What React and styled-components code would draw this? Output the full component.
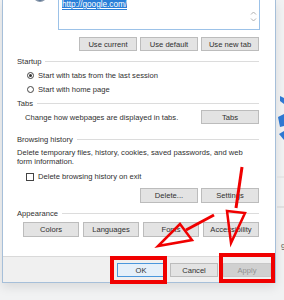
import React from "react";
import styled, { createGlobalStyle } from "styled-components";

const Global = createGlobalStyle`
  body {
    margin: 0;
    background: #f1f2f3;
    font-family: "Liberation Sans", Arial, sans-serif;
    font-size: 7.6px;
    color: #303030;
    overflow: hidden;
  }
`;

const Page = styled.div`
  position: relative;
  width: 284px;
  height: 300px;
  overflow: hidden;
  white-space: nowrap;
`;

const Dialog = styled.div`
  margin-left: 2px;
  width: 272px;
  height: 282px;
  border: 1px solid #a6bfd9;
  border-top: none;
  background: #f0f0f0;
  display: flex;
  flex-direction: column;
  box-shadow: 0 4px 10px rgba(0, 0, 0, 0.1);
`;

const Panel = styled.div`
  height: 256px;
  background: #fff;
  border-bottom: 1px solid #d9d9d9;
  padding: 0 16px 0 14px;
  display: flex;
  flex-direction: column;
`;

const HomeRow = styled.div`
  display: flex;
  height: 30px;
`;

const IconCol = styled.div`
  width: 37px;
  display: flex;
  justify-content: center;
  padding-left: 4px;
`;

const TextBox = styled.div`
  flex: 1;
  margin-right: -1px;
  border: 1px solid #9cc2e8;
  border-top: none;
  display: flex;
`;

const TextArea = styled.div`
  flex: 1;
  padding-left: 3px;
`;

const Selected = styled.span`
  display: inline-block;
  margin-top: -1px;
  background: #2a7fd8;
  color: #fff;
  font-size: 8.2px;
  text-decoration: underline;
  line-height: 9px;
  padding-bottom: 1px;
`;

const Scroll = styled.div`
  width: 11px;
  display: flex;
  flex-direction: column;
  align-items: center;
  gap: 3px;
  padding-top: 11px;
`;

const ButtonRow = styled.div`
  display: flex;
  justify-content: flex-end;
  gap: ${(p) => p.$gap || 3}px;
  margin-top: ${(p) => p.$top || 0}px;
`;

const Button = styled.div`
  width: ${(p) => p.$w || 58}px;
  height: ${(p) => p.$h || 14}px;
  box-sizing: border-box;
  border: 1px solid ${(p) => (p.$focus ? "#4a97dc" : p.$disabled ? "#c8c8c8" : "#bcbcbc")};
  background: ${(p) => (p.$focus ? "#e5f0fa" : p.$disabled ? "#d0d0d0" : "#e3e3e3")};
  color: ${(p) => (p.$disabled ? "#939393" : "#303030")};
  display: flex;
  align-items: center;
  justify-content: center;
`;

const Header = styled.div`
  display: flex;
  align-items: center;
  gap: 4px;
  height: 10px;
  margin-top: ${(p) => p.$top}px;
  &::after {
    content: "";
    flex: 1;
    height: 1px;
    background: #dcdcdc;
  }
`;

const Option = styled.div`
  display: flex;
  align-items: center;
  gap: 4px;
  height: ${(p) => p.$h || 14}px;
  margin-top: ${(p) => p.$top || 0}px;
  padding-left: ${(p) => p.$indent}px;
`;

const Radio = styled.span`
  width: 7px;
  height: 7px;
  box-sizing: border-box;
  border-radius: 50%;
  border: 1px solid #444;
  display: flex;
  align-items: center;
  justify-content: center;
  &::after {
    content: "";
    width: 3px;
    height: 3px;
    border-radius: 50%;
    background: ${(p) => (p.$on ? "#333" : "transparent")};
  }
`;

const Check = styled.span`
  width: 8px;
  height: 8px;
  box-sizing: border-box;
  border: 1px solid #444;
  background: #fff;
`;

const TabsRow = styled.div`
  display: flex;
  align-items: center;
  justify-content: space-between;
  height: 14px;
  margin-top: 2px;
  padding-left: 8px;
`;

const Desc = styled.div`
  margin-top: 4px;
  line-height: 9px;
`;

const Footer = styled.div`
  flex: 1;
  display: flex;
  justify-content: flex-end;
  align-items: flex-start;
  gap: 5px;
  padding: 6px 4px 0 0;
`;

const Mark = styled.div`
  position: absolute;
  left: ${(p) => p.$x}px;
  top: ${(p) => p.$y}px;
  width: ${(p) => p.$w}px;
  height: ${(p) => p.$h}px;
  box-sizing: border-box;
  border: 4px solid #f00000;
`;

const Overlay = styled.svg`
  position: absolute;
  left: 0;
  top: 0;
  pointer-events: none;
`;

const Backdrop = styled.svg`
  position: absolute;
  right: 0;
  top: 0;
`;

const GlobeIcon = () => (
  <svg width="14" height="3" viewBox="0 0 14 3">
    <path d="M2 0 Q7 4 12 0 Z" fill="#8595a8" />
    <path d="M5 0 Q7 2 9 0 Z" fill="#5a7596" />
  </svg>
);

const Chevron = ({ up }) => (
  <svg width="7" height="4" viewBox="0 0 7 4">
    <path d={up ? "M1 3.5 L3.5 1 L6 3.5" : "M1 0.5 L3.5 3 L6 0.5"} stroke="#b0b0b0" fill="none" />
  </svg>
);

export default function App() {
  return (
    <Page>
      <Global />
      <Backdrop width="9" height="300" viewBox="0 0 9 300">
        <path d="M5 96 L9 98 L9 104 L5 101 Z" fill="#2f78d2" />
        <path d="M3 117 L9 114 L9 126 L5 127 Z" fill="#2f78d2" />
        <path d="M4 134 L9 131 L9 140 Z" fill="#2f78d2" />
        <line x1="2" y1="177" x2="9" y2="177" stroke="#dcdcdc" />
        <line x1="2" y1="207" x2="9" y2="207" stroke="#cfcfcf" />
        <text x="6" y="248" fontSize="8" fill="#555" fontFamily="Liberation Sans">g</text>
      </Backdrop>
      <Dialog>
        <Panel>
          <HomeRow>
            <IconCol>
              <GlobeIcon />
            </IconCol>
            <TextBox>
              <TextArea>
                <Selected>http://google.com/</Selected>
              </TextArea>
              <Scroll>
                <Chevron up />
                <Chevron />
              </Scroll>
            </TextBox>
          </HomeRow>
          <ButtonRow $top={7}>
            <Button>Use current</Button>
            <Button>Use default</Button>
            <Button>Use new tab</Button>
          </ButtonRow>

          <Header $top={5}>Startup</Header>
          <Option $indent={10} $top={2}>
            <Radio $on />
            Start with tabs from the last session
          </Option>
          <Option $indent={10}>
            <Radio />
            Start with home page
          </Option>

          <Header $top={2}>Tabs</Header>
          <TabsRow>
            <span>Change how webpages are displayed in tabs.</span>
            <Button>Tabs</Button>
          </TabsRow>

          <Header $top={10}>Browsing history</Header>
          <Desc>
            Delete temporary files, history, cookies, saved passwords, and web
            <br />
            form information.
          </Desc>
          <Option $indent={9} $top={5} $h={11}>
            <Check />
            Delete browsing history on exit
          </Option>
          <ButtonRow $top={6}>
            <Button $h={15}>Delete...</Button>
            <Button $h={15}>Settings</Button>
          </ButtonRow>

          <Header $top={5}>Appearance</Header>
          <ButtonRow $top={4} $gap={4}>
            <Button $w={56} $h={15}>Colors</Button>
            <Button $w={56} $h={15}>Languages</Button>
            <Button $w={56} $h={15}>Fonts</Button>
            <Button $w={56} $h={15}>Accessibility</Button>
          </ButtonRow>
        </Panel>
        <Footer>
          <Button $w={48} $focus>OK</Button>
          <Button $w={48}>Cancel</Button>
          <Button $w={48} $disabled>Apply</Button>
        </Footer>
      </Dialog>

      <Mark $x={110} $y={256} $w={57} $h={28} />
      <Mark $x={219} $y={253} $w={56} $h={30} />

      <Overlay width="284" height="300" viewBox="0 0 284 300">
        <g stroke="#f00000" strokeWidth="3" fill="none" strokeLinejoin="miter">
          <line x1="242" y1="167" x2="236" y2="208" />
          <path d="M227 211 L245 213 L231 243 Z" strokeWidth="2.5" />
          <line x1="214" y1="215" x2="186" y2="230" />
          <path d="M180 224 L192 240 L158 246 Z" strokeWidth="2.5" />
        </g>
      </Overlay>
    </Page>
  );
}
